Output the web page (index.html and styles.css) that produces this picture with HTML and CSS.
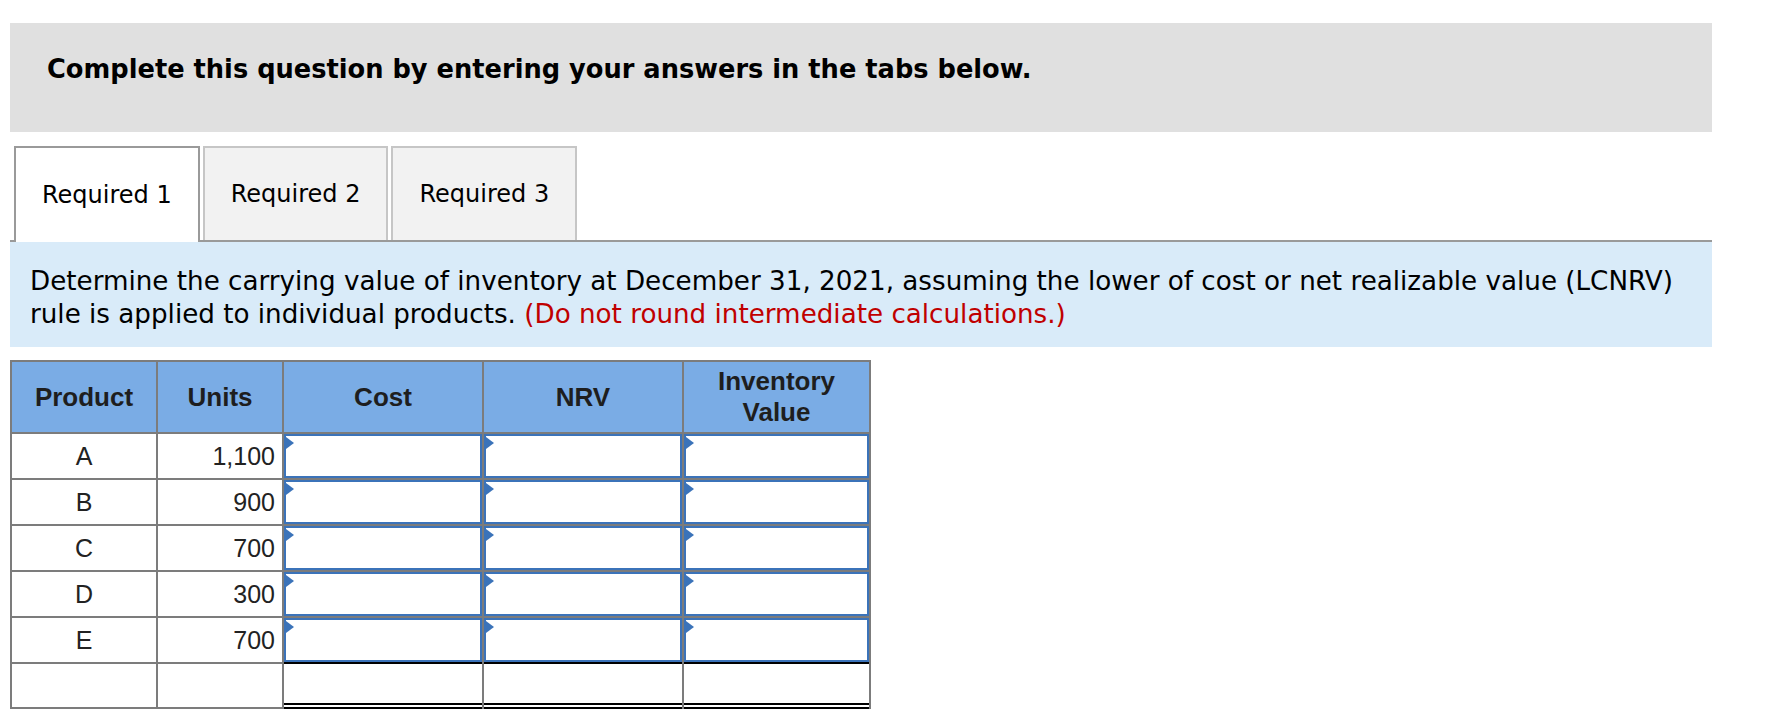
FILE: index.html
```html
<!DOCTYPE html>
<html>
<head>
<meta charset="utf-8">
<link rel="stylesheet" href="styles.css">
</head>
<body>
<div class="page">
  <div class="instructions">Complete this question by entering your answers in the tabs below.</div>
  <div class="tabs">
    <div class="tab active">Required 1</div>
    <div class="tab">Required 2</div>
    <div class="tab">Required 3</div>
  </div>
  <div class="prompt">Determine the carrying value of inventory at December 31, 2021, assuming the lower of cost or net realizable value (LCNRV)<br>rule is applied to individual products. <span class="note">(Do not round intermediate calculations.)</span></div>
  <div class="grid">
    <div class="hd">Product</div>
    <div class="hd">Units</div>
    <div class="hd">Cost</div>
    <div class="hd">NRV</div>
    <div class="hd">Inventory<br>Value</div>

    <div class="cell center">A</div>
    <div class="cell right">1,100</div>
    <div class="inp"></div><div class="inp"></div><div class="inp"></div>

    <div class="cell center">B</div>
    <div class="cell right">900</div>
    <div class="inp"></div><div class="inp"></div><div class="inp"></div>

    <div class="cell center">C</div>
    <div class="cell right">700</div>
    <div class="inp"></div><div class="inp"></div><div class="inp"></div>

    <div class="cell center">D</div>
    <div class="cell right">300</div>
    <div class="inp"></div><div class="inp"></div><div class="inp"></div>

    <div class="cell center">E</div>
    <div class="cell right">700</div>
    <div class="inp"></div><div class="inp"></div><div class="inp"></div>

    <div class="cell"></div>
    <div class="cell"></div>
    <div class="total"></div><div class="total"></div><div class="total"></div>
  </div>
</div>
</body>
</html>
```

FILE: styles.css
```css
html, body {
  margin: 0;
  padding: 0;
  background: #fff;
}

.page {
  width: 1702px;
  padding: 23px 0 0 10px;
  font-family: "DejaVu Sans", Verdana, sans-serif;
  color: #000;
}

.instructions {
  box-sizing: border-box;
  height: 109px;
  padding: 31px 0 0 37px;
  background: #e0e0e0;
  font-weight: bold;
  font-size: 25.7px;
  line-height: 1.2;
}

.tabs {
  display: flex;
  gap: 3px;
  margin-top: 14px;
  padding-left: 4px;
  height: 94px;
  border-bottom: 2px solid #9a9a9a;
}

.tab {
  display: flex;
  align-items: center;
  justify-content: center;
  padding: 0 26px;
  border: 2px solid #c6c6c6;
  border-bottom: 0;
  background: #f2f2f2;
  font-size: 24px;
}

.tab.active {
  background: #fff;
  border-color: #9a9a9a;
  margin-bottom: -2px;
}

.prompt {
  box-sizing: border-box;
  height: 105px;
  padding: 23px 0 0 20px;
  background: #d9ebf9;
  font-size: 26.2px;
  line-height: 33px;
}

.note {
  color: #c00000;
}

.grid {
  display: grid;
  grid-template-columns: 144px 124px 198px 198px 185px;
  grid-template-rows: 70px 44px 44px 44px 44px 44px 43px;
  gap: 2px;
  padding: 2px;
  width: max-content;
  margin-top: 13px;
  background: #7c7c7c;
  font-family: "Liberation Sans", Arial, sans-serif;
  font-size: 25px;
  color: #222;
}

.hd {
  display: flex;
  align-items: center;
  justify-content: center;
  text-align: center;
  background: #7aace5;
  font-weight: bold;
  font-size: 26px;
  color: #1e1e1e;
}

.cell {
  display: flex;
  align-items: center;
  background: #fff;
}

.center {
  justify-content: center;
}

.right {
  justify-content: flex-end;
  padding-right: 7px;
}

.inp {
  position: relative;
  box-sizing: border-box;
  background: #fff;
  border: 2px solid #3b73b9;
}

.inp::before {
  content: "";
  position: absolute;
  top: 1px;
  left: 0;
  border-left: 8px solid #3b73b9;
  border-top: 6px solid transparent;
  border-bottom: 6px solid transparent;
}

.total {
  background: #fff;
  border-top: 2px solid #000;
  border-bottom: 6px double #000;
  margin: -2px 0 -2px 0;
}
```
